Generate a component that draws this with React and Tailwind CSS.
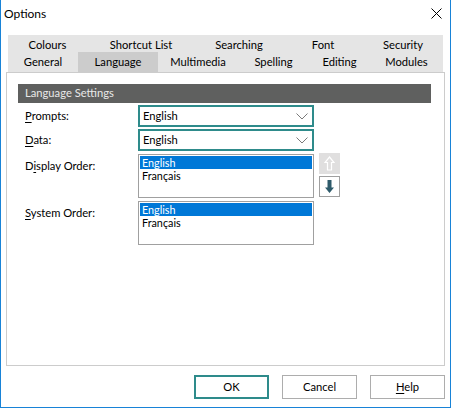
import React from "react";

const row1 = [
  { label: "Colours", w: "w-[79px]" },
  { label: "Shortcut List", w: "w-[108px]" },
  { label: "Searching", w: "w-[88px]" },
  { label: "Font", w: "w-[80px]" },
  { label: "Security", w: "w-[80px]" },
];

const row2 = [
  { label: "General", w: "w-[70px]" },
  { label: "Language", w: "w-[80px]", active: true },
  { label: "Multimedia", w: "w-[80px]" },
  { label: "Spelling", w: "w-[71px]" },
  { label: "Editing", w: "w-[61px]" },
  { label: "Modules", w: "w-[73px]" },
];

function Chevron() {
  return (
    <svg width="12" height="7" viewBox="0 0 12 7" className="shrink-0">
      <path d="M0.5 0.5 L6 6 L11.5 0.5" fill="none" stroke="#7a7a7a" strokeWidth="1" />
    </svg>
  );
}

function Combo({ value }) {
  return (
    <div className="w-[176px] h-[22px] border-2 border-[#2e8b8b] bg-white flex items-center justify-between pl-[3px] pr-[4px]">
      <span>{value}</span>
      <Chevron />
    </div>
  );
}

function ListBox({ items }) {
  return (
    <div className="w-[176px] h-[44px] border border-[#a0a0a0] bg-white p-px">
      {items.map((it, i) => (
        <div
          key={it}
          className={`h-[13px] leading-[13px] text-[10.8px] pl-[2px] ${i === 0 ? "bg-[#0078d7] text-white" : "text-black"}`}
        >
          {it}
        </div>
      ))}
    </div>
  );
}

function ArrowButtons() {
  return (
    <div className="flex flex-col gap-[2px] ml-[5px] -mt-px">
      <div className="w-[21px] h-[21px] bg-[#e0dfdf] flex items-center justify-center">
        <svg width="11" height="15" viewBox="0 0 11 15">
          <path d="M5.5 1 L10 6.5 L7.5 6.5 L7.5 14 L3.5 14 L3.5 6.5 L1 6.5 Z" fill="none" stroke="#ffffff" strokeWidth="1.2" />
        </svg>
      </div>
      <div className="w-[21px] h-[21px] border border-[#a0a0a0] bg-white flex items-center justify-center">
        <svg width="11" height="15" viewBox="0 0 11 15">
          <path d="M3.5 1 L7.5 1 L7.5 8.5 L10 8.5 L5.5 14 L1 8.5 L3.5 8.5 Z" fill="#2f5b6b" />
        </svg>
      </div>
    </div>
  );
}

function Button({ children, primary }) {
  return (
    <div
      className={`w-[75px] h-[24px] flex items-center justify-center bg-white ${
        primary ? "border-2 border-[#2e8b8b]" : "border border-[#adadad]"
      }`}
    >
      {children}
    </div>
  );
}

export default function App() {
  return (
    <div
      className="w-[451px] h-[408px] bg-white border-x border-b border-[#1883d7] flex flex-col text-[11.2px] text-black"
      style={{ fontFamily: 'Lato, "Noto Sans", sans-serif' }}
    >
      {/* Title bar */}
      <div className="h-[35px] shrink-0">
        <div className="h-[27px] flex items-center justify-between pl-[3px] pr-[8px]">
          <span className="text-[12px]">Options</span>
          <svg width="11" height="11" viewBox="0 0 11 11">
            <path d="M0.5 0.5 L10.5 10.5 M10.5 0.5 L0.5 10.5" stroke="#000" strokeWidth="1" />
          </svg>
        </div>
      </div>

      {/* Tab strip */}
      <div className="ml-[7px] w-[435px] bg-[#e5e5e5]">
        <div className="flex h-[18px] items-center pt-px">
          {row1.map((t) => (
            <div key={t.label} className={`${t.w} text-center leading-[14px]`}>
              {t.label}
            </div>
          ))}
        </div>
        <div className="flex h-[19px] items-end">
          {row2.map((t) => (
            <div
              key={t.label}
              className={`${t.w} flex items-center justify-center ${
                t.active ? "h-[20px] bg-[#cccccc]" : "h-[19px]"
              }`}
            >
              {t.label}
            </div>
          ))}
        </div>
      </div>

      {/* Page */}
      <div className="ml-[5px] w-[439px] h-[294px] border border-[#cccccc] pt-[11px] pl-[11px]">
        <div className="w-[413px] h-[19px] bg-[#5f605f] text-[#e8e8e8] flex items-center pl-[7px]">
          Language Settings
        </div>

        <div className="flex flex-col pl-[7px] pt-[2px]">
          <div className="flex items-center h-[22px]">
            <div className="w-[113px]">
              <u className="underline-offset-2">P</u>rompts:
            </div>
            <Combo value="English" />
          </div>
          <div className="flex items-center h-[22px] mt-[2px]">
            <div className="w-[113px]">
              <u className="underline-offset-2">D</u>ata:
            </div>
            <Combo value="English" />
          </div>
          <div className="flex items-start mt-[3px]">
            <div className="w-[113px] pt-[4px]">
              D<u className="underline-offset-2">i</u>splay Order:
            </div>
            <ListBox items={["English", "Français"]} />
            <ArrowButtons />
          </div>
          <div className="flex items-start mt-[3px]">
            <div className="w-[113px] pt-[4px]">
              <u className="underline-offset-2">S</u>ystem Order:
            </div>
            <ListBox items={["English", "Français"]} />
          </div>
        </div>
      </div>

      {/* Buttons */}
      <div className="flex justify-end gap-[13px] pr-[5px] mt-[9px]">
        <Button primary>OK</Button>
        <Button>Cancel</Button>
        <Button>
          <span>
            <u className="underline-offset-2">H</u>elp
          </span>
        </Button>
      </div>
    </div>
  );
}
